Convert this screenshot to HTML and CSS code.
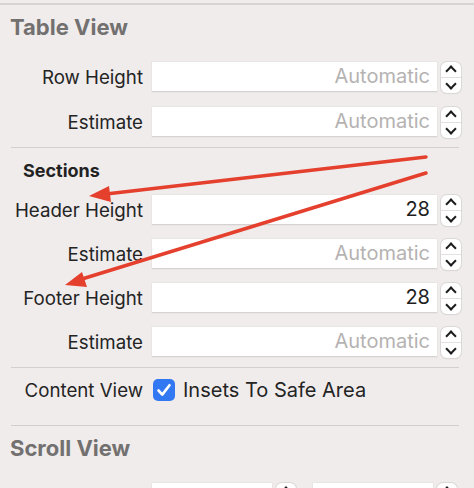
FILE: index.html
```html
<!DOCTYPE html>
<html lang="en">
<head>
    <meta charset="UTF-8">
    <meta name="viewport" content="width=device-width, initial-scale=1.0">
    <title>Table View Inspector</title>
    <link rel="stylesheet" href="styles.css">
</head>
<body>
    <div class="inspector">
        <div class="topline"></div>

        <h2 class="panel-title">Table View</h2>
        <div class="form-grid first">
            <label class="field-label">Row Height</label>
            <div class="field placeholder">Automatic</div>
            <div class="stepper"><span class="up"></span><span class="down"></span></div>

            <label class="field-label">Estimate</label>
            <div class="field placeholder">Automatic</div>
            <div class="stepper"><span class="up"></span><span class="down"></span></div>
        </div>

        <div class="sep sep-a"></div>

        <h3 class="section-title">Sections</h3>
        <div class="form-grid sections">
            <label class="field-label">Header Height</label>
            <div class="field">28</div>
            <div class="stepper"><span class="up"></span><span class="down"></span></div>

            <label class="field-label">Estimate</label>
            <div class="field placeholder">Automatic</div>
            <div class="stepper"><span class="up"></span><span class="down"></span></div>

            <label class="field-label">Footer Height</label>
            <div class="field">28</div>
            <div class="stepper"><span class="up"></span><span class="down"></span></div>

            <label class="field-label">Estimate</label>
            <div class="field placeholder">Automatic</div>
            <div class="stepper"><span class="up"></span><span class="down"></span></div>
        </div>

        <div class="sep sep-b"></div>

        <div class="check-row">
            <label class="field-label">Content View</label>
            <div class="check-wrap">
                <span class="checkbox">
                    <svg width="22" height="22" viewBox="0 0 22 22">
                        <path d="M5.5 11.5 L9.3 15.6 L16.5 6.2" fill="none" stroke="#fff" stroke-width="2.6" stroke-linecap="round" stroke-linejoin="round"/>
                    </svg>
                </span>
                <span class="check-text">Insets To Safe Area</span>
            </div>
        </div>

        <div class="sep sep-c"></div>

        <h2 class="panel-title scroll">Scroll View</h2>
        <div class="split-row">
            <div class="field small"></div>
            <div class="stepper"><span class="up"></span><span class="down"></span></div>
            <div class="field small"></div>
            <div class="stepper"><span class="up"></span><span class="down"></span></div>
        </div>

        <!-- annotation arrows drawn over the panel -->
        <svg class="arrows" width="474" height="488" viewBox="0 0 474 488">
            <line x1="426" y1="157" x2="106" y2="194" stroke="#e4402d" stroke-width="3.5" stroke-linecap="round"/>
            <polygon points="89,196 109,186 111,202" fill="#e4402d"/>
            <line x1="426" y1="173" x2="82" y2="279" stroke="#e4402d" stroke-width="3.5" stroke-linecap="round"/>
            <polygon points="65,285 82,272 87,287" fill="#e4402d"/>
        </svg>
    </div>
</body>
</html>
```

FILE: styles.css
```css
body {
    margin: 0;
    background-color: #f0ecec;
    font-family: Inter, "Noto Sans", sans-serif;
    color: #242424;
}
.inspector {
    position: relative;
    width: 474px;
    height: 488px;
    overflow: hidden;
}
.topline {
    margin-top: 3px;
    height: 2px;
    background-color: #d8d4d4;
}
.panel-title {
    margin: 9px 0 0 10px;
    font-size: 22px;
    line-height: 26px;
    font-weight: 700;
    color: #737070;
}
.panel-title.scroll {
    margin-top: 9px;
}
.section-title {
    margin: 12px 0 0 23px;
    font-size: 18px;
    line-height: 22px;
    font-weight: 700;
    color: #222;
}
.form-grid {
    display: grid;
    grid-template-columns: 143px 285px 20px;
    column-gap: 9px;
    row-gap: 15px;
    grid-auto-rows: 30px;
    align-items: center;
}
.form-grid .stepper {
    margin-left: -5px;
}
.form-grid.first {
    margin-top: 22px;
}
.form-grid.sections {
    margin-top: 13px;
    row-gap: 14px;
}
.field-label {
    text-align: right;
    font-size: 18.7px;
    white-space: nowrap;
}
.field {
    background: #fff;
    border-bottom: 1px solid #d6d2d2;
    box-shadow: 0 0 0 0.5px #e2dede;
    text-align: right;
    padding-right: 7px;
    font-size: 20px;
    line-height: 29px;
    color: #1e1e1e;
    box-sizing: border-box;
    height: 30px;
}
.field.placeholder {
    color: #b5b2b2;
}
.stepper {
    width: 20px;
    height: 31px;
    background: #fff;
    border-radius: 6px;
    box-shadow: 0 0 0 1px #dcd8d8, 0 1px 1px rgba(0, 0, 0, 0.12);
    display: flex;
    flex-direction: column;
    box-sizing: border-box;
}
.stepper span {
    flex: 1;
    position: relative;
}
.stepper .up {
    border-bottom: 1px solid #e4e0e0;
}
.stepper span::after {
    content: "";
    position: absolute;
    left: 6px;
    width: 6px;
    height: 6px;
    border-left: 2px solid #1c1c1c;
    border-top: 2px solid #1c1c1c;
}
.stepper .up::after {
    top: 5px;
    transform: rotate(45deg);
}
.stepper .down::after {
    top: 2px;
    transform: rotate(-135deg);
}
.sep {
    height: 1px;
    background-color: #d3cfcf;
    margin-left: 11px;
    margin-right: 15px;
}
.sep-a {
    margin-top: 10px;
}
.sep-b {
    margin-top: 10px;
}
.sep-c {
    margin-top: 25px;
}
.check-row {
    display: grid;
    grid-template-columns: 143px auto;
    column-gap: 10px;
    align-items: center;
    margin-top: 10px;
    height: 22px;
}
.check-wrap {
    display: flex;
    align-items: center;
    gap: 8px;
}
.checkbox {
    width: 22px;
    height: 22px;
    border-radius: 5px;
    background-color: #3178f2;
    display: block;
}
.checkbox svg {
    display: block;
}
.check-text {
    font-size: 20px;
}
.split-row {
    display: flex;
    align-items: flex-start;
    margin-top: 22px;
    padding-left: 152px;
}
.field.small {
    width: 122px;
}
.split-row .stepper {
    margin-left: 4px;
    margin-right: 17px;
}
.arrows {
    position: absolute;
    left: 0;
    top: 0;
    pointer-events: none;
}
```
